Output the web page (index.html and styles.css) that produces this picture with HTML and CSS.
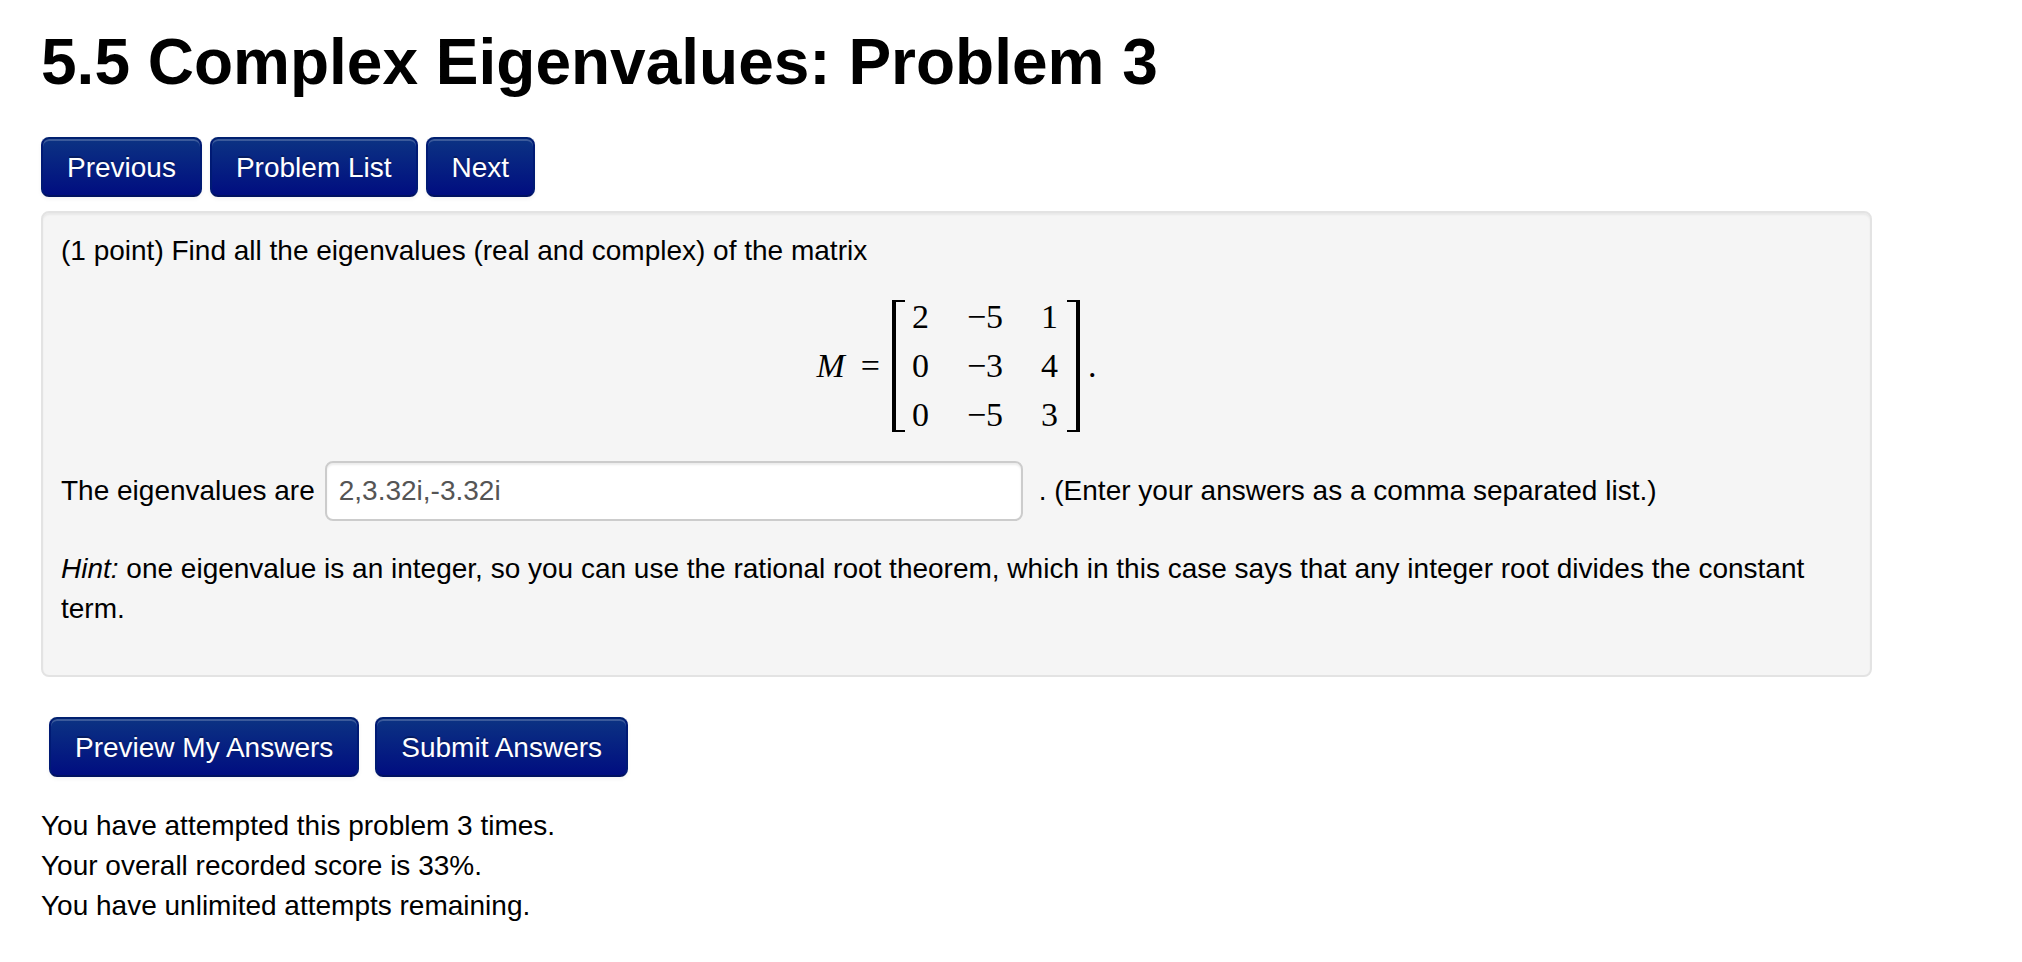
FILE: index.html
```html
<!DOCTYPE html>
<html lang="en">
<head>
	<meta charset="UTF-8">
	<title>5.5 Complex Eigenvalues: Problem 3</title>
	<link rel="stylesheet" href="styles.css">
</head>
<body>
<h1 class="page_title">5.5 Complex Eigenvalues: Problem 3</h1>
<nav class="nav_btns">
	<button type="button" class="btn">Previous</button>
	<button type="button" class="btn">Problem List</button>
	<button type="button" class="btn">Next</button>
</nav>
<form>
	<div class="problem">
		<p>(1 point) Find all the eigenvalues (real and complex) of the matrix</p>
		<div class="math">
			<i>M</i>
			<span class="eq">=</span>
			<table class="matrix">
				<tr><td>2</td><td>−5</td><td>1</td></tr>
				<tr><td>0</td><td>−3</td><td>4</td></tr>
				<tr><td>0</td><td>−5</td><td>3</td></tr>
			</table>
			<span class="dot">.</span>
		</div>
		<div class="answer">
			<label for="ans1">The eigenvalues are</label>
			<input type="text" id="ans1" class="ans" value="2,3.32i,-3.32i">
			<span>. (Enter your answers as a comma separated list.)</span>
		</div>
		<p><em>Hint:</em> one eigenvalue is an integer, so you can use the rational root theorem, which in this case says that any integer root divides the constant term.</p>
	</div>
	<div class="submit_btns">
		<button type="button" class="btn">Preview My Answers</button>
		<button type="submit" class="btn">Submit Answers</button>
	</div>
</form>
<p class="score">
	You have attempted this problem 3 times.<br>
	Your overall recorded score is 33%.<br>
	You have unlimited attempts remaining.
</p>
</body>
</html>
```

FILE: styles.css
```css
*{margin:0;padding:0;box-sizing:border-box;}
body{padding:22px 150px 40px 41px;font:28px/40px "Helvetica Neue","Liberation Sans",Arial,sans-serif;color:#000;background:#fff;}
.page_title{font-size:64px;line-height:80px;font-weight:bold;}

/* buttons */
.btn{height:60px;padding:2px 24px 0;font-family:inherit;font-size:28px;line-height:40px;color:#fff;text-shadow:0 -2px 0 rgba(0,0,0,0.25);background:linear-gradient(#0c3483,#000c80);background-origin:border-box;border:2px solid;border-color:#002070 #001a74 #001260;border-radius:8px;box-shadow:inset 0 2px 0 rgba(255,255,255,0.2),0 2px 4px rgba(0,0,0,0.05);cursor:pointer;}
.nav_btns{display:flex;gap:8px;margin-top:35px;}
.submit_btns{display:flex;gap:16px;margin:40px 8px 0;}

/* problem box */
.problem{margin-top:14px;padding:18px 18px 46px;background:#f5f5f5;border:2px solid #e3e3e3;border-radius:8px;box-shadow:inset 0 2px 2px rgba(0,0,0,0.05);}
.math{display:flex;justify-content:center;align-items:center;margin:29px 0;font-family:"Liberation Serif","Times New Roman",serif;font-size:34px;}
.eq{margin:0 12px 0 16px;}
.matrix{border-spacing:0;position:relative;padding:0 4px;border:solid #000;border-width:0 4px;}
.matrix:before,.matrix:after{content:"";position:absolute;top:0;bottom:0;width:9px;border:solid #000;border-width:2px 0;}
.matrix:before{left:0;}
.matrix:after{right:0;}
.matrix td{height:48px;line-height:34px;padding:0 19px;text-align:right;}
.matrix td:first-child{padding-left:12px;}
.matrix td:last-child{padding-right:14px;}
.matrix tr:first-child td,.matrix tr:last-child td{height:42px;}
.matrix tr:first-child td{vertical-align:top;}
.matrix tr:last-child td{vertical-align:bottom;}
.dot{margin-left:8px;}
.answer{display:flex;align-items:center;margin-bottom:28px;}
.ans{flex:0 1 698px;min-width:0;height:60px;margin:0 16px 0 10px;padding:0 12px;font-family:inherit;font-size:28px;color:#555;background:#fff;border:2px solid #ccc;border-radius:8px;box-shadow:inset 0 2px 2px rgba(0,0,0,0.075);}
.score{margin-top:29px;}
```
